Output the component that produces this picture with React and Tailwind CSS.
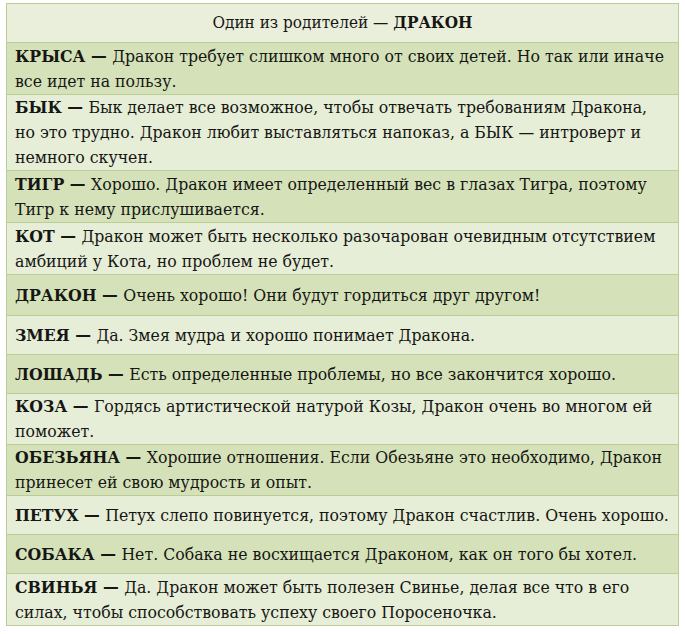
import React from "react";

const rows = [
  { name: "КРЫСА", lines: ["Дракон требует слишком много от своих детей. Но так или иначе", "все идет на пользу."], h: "min-h-[52px]" },
  { name: "БЫК", lines: ["Бык делает все возможное, чтобы отвечать требованиям Дракона,", "но это трудно. Дракон любит выставляться напоказ, а БЫК — интроверт и", "немного скучен."], h: "min-h-[76px]" },
  { name: "ТИГР", lines: ["Хорошо. Дракон имеет определенный вес в глазах Тигра, поэтому", "Тигр к нему прислушивается."], h: "min-h-[52px]" },
  { name: "КОТ", lines: ["Дракон может быть несколько разочарован очевидным отсутствием", "амбиций у Кота, но проблем не будет."], h: "min-h-[52px]" },
  { name: "ДРАКОН", lines: ["Очень хорошо! Они будут гордиться друг другом!"], h: "min-h-[41px]" },
  { name: "ЗМЕЯ", lines: ["Да. Змея мудра и хорошо понимает Дракона."], h: "min-h-[39px]" },
  { name: "ЛОШАДЬ", lines: ["Есть определенные проблемы, но все закончится хорошо."], h: "min-h-[39px]" },
  { name: "КОЗА", lines: ["Гордясь артистической натурой Козы, Дракон очень во многом ей", "поможет."], h: "min-h-[50px]" },
  { name: "ОБЕЗЬЯНА", lines: ["Хорошие отношения. Если Обезьяне это необходимо, Дракон", "принесет ей свою мудрость и опыт."], h: "min-h-[51px]" },
  { name: "ПЕТУХ", lines: ["Петух слепо повинуется, поэтому Дракон счастлив. Очень хорошо."], h: "min-h-[39px]" },
  { name: "СОБАКА", lines: ["Нет. Собака не восхищается Драконом, как он того бы хотел."], h: "min-h-[39px]" },
  { name: "СВИНЬЯ", lines: ["Да. Дракон может быть полезен Свинье, делая все что в его", "силах, чтобы способствовать успеху своего Поросеночка."], h: "min-h-[52px]" },
];

const Row = ({ row, dark }) => (
  <div
    className={`${row.h} flex flex-col justify-center border-t border-[#b9cd94] px-2 ${
      dark ? "bg-[#d5e2b9]" : "bg-[#e7eed7]"
    }`}
  >
    {row.lines.map((line, i) => (
      <div key={i} className="whitespace-nowrap leading-[25px]">
        {i === 0 && <span className="font-bold">{row.name} — </span>}
        {line}
      </div>
    ))}
  </div>
);

export default function App() {
  return (
    <div className="w-[685px] h-[634px] bg-white pt-[3px] pl-[6px]">
      <div
        className="w-[673px] border border-[#b9cd94] text-[17.5px] text-[#161614] [font-stretch:condensed]"
        style={{ fontFamily: '"DejaVu Serif Condensed", "DejaVu Serif", "Liberation Serif", serif' }}
      >
        <div className="h-[38px] flex items-center justify-center bg-[#eaefdc] text-[17px]">
          Один из родителей — <span className="font-bold ml-[5px]">ДРАКОН</span>
        </div>
        {rows.map((row, i) => (
          <Row key={row.name} row={row} dark={i % 2 === 0} />
        ))}
      </div>
    </div>
  );
}
